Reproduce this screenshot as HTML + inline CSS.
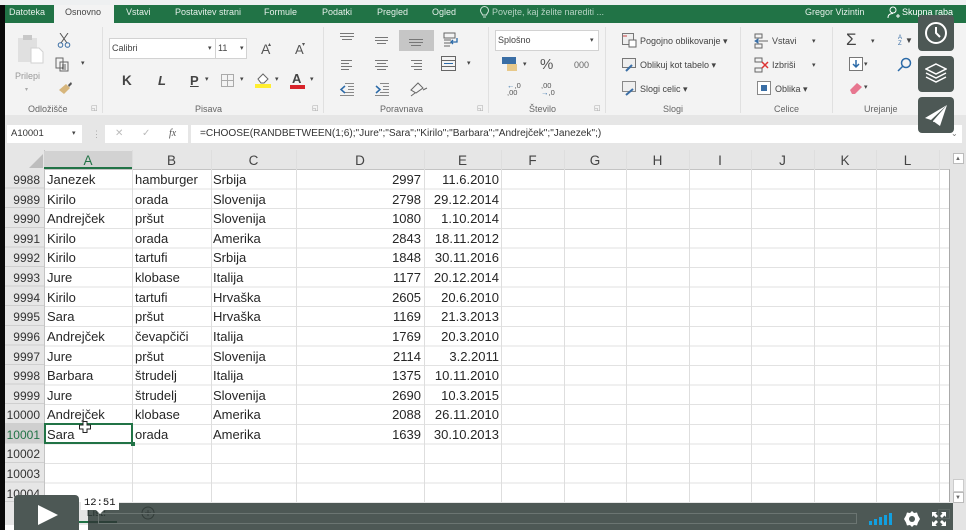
<!DOCTYPE html>
<html><head><meta charset="utf-8">
<style>
html,body{margin:0;padding:0;background:#000}
#p{position:relative;width:966px;height:530px;overflow:hidden;background:#e6e6e6;font-family:"Liberation Sans",sans-serif;color:#333}
#p div,#p span,#p svg{position:absolute}
.t{white-space:nowrap;line-height:14px}
.tab{top:6px;font-size:9px;line-height:13px;white-space:nowrap;color:#e6f0ea}
.rb{font-size:9px;color:#444;white-space:nowrap;line-height:12px}
.gl{font-size:9px;color:#666;top:103px;white-space:nowrap;line-height:12px}
.sep{top:27px;width:1px;height:86px;background:#e0e0e0}
.ch{top:153px;font-size:13.5px;color:#444;line-height:16px;text-align:center}
.cl{top:150px;width:1px;height:352px;background:#dedede}
.n{left:5px;width:35px;text-align:right;font-size:12px;color:#333;line-height:16px}
.c{font-size:13px;color:#262626;line-height:16px;white-space:nowrap}
.box{background:#4d5855;border-radius:4px;width:36px;height:36px;left:918px}
</style></head><body><div id="p">
<div style="left:0;top:0;width:966px;height:5px;background:#eef0f1"></div>
<div style="left:5px;top:5px;width:961px;height:18px;background:#217346"></div>
<div style="left:54px;top:5px;width:60px;height:19px;background:#f3f3f3"></div>
<div class="tab" style="left:9px">Datoteka</div>
<div class="tab" style="left:65px;color:#444">Osnovno</div>
<div class="tab" style="left:126px">Vstavi</div>
<div class="tab" style="left:175px">Postavitev strani</div>
<div class="tab" style="left:264px">Formule</div>
<div class="tab" style="left:322px">Podatki</div>
<div class="tab" style="left:377px">Pregled</div>
<div class="tab" style="left:432px">Ogled</div>
<svg style="left:479px;top:6px" width="11" height="13" viewBox="0 0 11 13"><path d="M3.500 9C3 7 1.500 6.500 1.500 4.500a4 4 0 0 1 8 0C9.500 6.500 8 7 7.500 9zM4 11h3" fill="none" stroke="#cfe3d8"/></svg>
<div class="tab" style="left:492px;color:#b5d3c3">Povejte, kaj želite narediti ...</div>
<div class="tab" style="left:805px">Gregor Vizintin</div>
<svg style="left:887px;top:6px" width="14" height="13" viewBox="0 0 14 13"><circle cx="6" cy="4" r="3" fill="none" stroke="#fff"/><path d="M1 12c0-3 2-4.500 5-4.500M9 10h4M11 8v4" fill="none" stroke="#fff"/></svg>
<div class="tab" style="left:902px;color:#fff">Skupna raba</div>

<!-- ribbon -->
<div style="left:5px;top:23px;width:961px;height:92px;background:#f3f3f3"></div>
<div class="sep" style="left:102px"></div><div class="sep" style="left:323px"></div><div class="sep" style="left:488px"></div><div class="sep" style="left:605px"></div><div class="sep" style="left:740px"></div><div class="sep" style="left:832px"></div>

<!-- clipboard -->
<svg style="left:16px;top:33px" width="30" height="32" viewBox="0 0 30 32"><rect x="2" y="5" width="19" height="24" fill="#e0e0e0"/><rect x="7" y="2" width="9" height="5" fill="#c8c8c8"/><path d="M15 15h8l4 4v11H15z" fill="#fff" stroke="#d2d2d2"/></svg>
<div class="rb" style="left:15px;top:70px;color:#999">Prilepi</div>
<div class="rb" style="left:25px;top:84px;font-size:6px;color:#aaa">▾</div>
<svg style="left:57px;top:33px" width="14" height="15" viewBox="0 0 14 15"><path d="M3 0l7 10M11 0L4 10" stroke="#555" fill="none"/><circle cx="3.500" cy="12" r="2.300" fill="none" stroke="#3a6ea5"/><circle cx="10.500" cy="12" r="2.300" fill="none" stroke="#3a6ea5"/></svg>
<svg style="left:55px;top:57px" width="15" height="15" viewBox="0 0 15 15"><path d="M1 1h7v10H1zM5 5h8v9H5z" fill="#f3f3f3" stroke="#666"/><path d="M7 8h4M7 10h4M7 12h4" stroke="#666"/></svg>
<svg style="left:58px;top:81px" width="15" height="14" viewBox="0 0 15 14"><path d="M1 9l7-6 4 4-6 6z" fill="#d7b67c"/><path d="M10 4l3-3 1 2-3 3z" fill="#555"/></svg>
<div class="rb" style="left:81px;top:58px;font-size:7px">▾</div>
<div class="gl" style="left:28px">Odložišče</div>

<!-- font -->
<div style="left:109px;top:38px;width:138px;height:21px;background:#fff;border:1px solid #d2d2d2;box-sizing:border-box"></div>
<div style="left:215px;top:39px;width:1px;height:19px;background:#d2d2d2"></div>
<div class="rb" style="left:112px;top:42px">Calibri</div>
<div class="rb" style="left:208px;top:43px;font-size:7px">▾</div>
<div class="rb" style="left:218px;top:42px">11</div>
<div class="rb" style="left:240px;top:43px;font-size:7px">▾</div>
<div class="t" style="left:261px;top:42px;font-size:14px;color:#555">A</div>
<div class="t" style="left:295px;top:43px;font-size:13px;color:#555">A</div>
<div class="t" style="left:268px;top:38px;font-size:6px;color:#555">▴</div>
<div class="t" style="left:302px;top:38px;font-size:6px;color:#555">▾</div>
<div class="t" style="left:122px;top:74px;font-size:13.500px;font-weight:bold;color:#444">K</div>
<div class="t" style="left:158px;top:74px;font-size:13px;font-weight:bold;font-style:italic;color:#444">L</div>
<div class="t" style="left:190px;top:74px;font-size:13px;font-weight:bold;color:#444;text-decoration:underline">P</div>
<div class="rb" style="left:205px;top:74px;font-size:7px">▾</div>
<svg style="left:221px;top:74px" width="13" height="13" viewBox="0 0 13 13"><path d="M.5.5h12v12H.5zM6.500.5v12M.5 6.500h12" fill="none" stroke="#aaa"/></svg>
<div class="rb" style="left:240px;top:74px;font-size:7px">▾</div>
<svg style="left:255px;top:72px" width="17" height="17" viewBox="0 0 17 17"><path d="M3 7l5-5 5 5-4 4H6z" fill="#fff" stroke="#666"/><rect x="0" y="12" width="16" height="4" fill="#ffee30"/></svg>
<div class="rb" style="left:275px;top:74px;font-size:7px">▾</div>
<div class="t" style="left:292px;top:72px;font-size:13px;font-weight:bold;color:#444">A</div>
<div style="left:290px;top:85px;width:15px;height:4px;background:#d8232a"></div>
<div class="rb" style="left:310px;top:74px;font-size:7px">▾</div>
<div class="gl" style="left:195px">Pisava</div>
<div class="gl" style="left:91px;font-size:7px;color:#999">◱</div><div class="gl" style="left:312px;font-size:7px;color:#999">◱</div>

<!-- align -->
<div style="left:399px;top:30px;width:35px;height:21px;background:#c6c6c6"></div>
<svg style="left:335px;top:30px" width="100" height="70" viewBox="0 0 100 70" stroke="#777" fill="none">
<path d="M5 3.500h14M5 6.500h14M7 9.500h10M40 7.500h13M40 10.500h13M42 13.500h9M74 9.500h14M74 12.500h14M76 15.500h10"/>
<path d="M6 30.500h11M6 33.500h8M6 36.500h11M6 39.500h8M40 30.500h13M42 33.500h9M40 36.500h13M42 39.500h9M76 30.500h11M79 33.500h8M76 36.500h11M79 39.500h8"/>
<path d="M10 53.500h9M13 56.500h6M13 59.500h6M10 62.500h9M5 65.500h14M54 53.500h-9M54 56.500h-6M54 59.500h-6M54 62.500h-9M54 65.500h-14" stroke="#888"/>
<path d="M10 56l-4 3.500 4 3.500M41 56l4 3.500-4 3.500" stroke="#2b6aa8" stroke-width="1.500"/>
<path d="M76 60l7-7 5 5-7 5zM80 63l-4 3M88 60l4-2" stroke="#666"/>
</svg>
<svg style="left:441px;top:32px" width="19" height="40" viewBox="0 0 19 40" fill="none" stroke="#666"><path d="M3 1h11v5H3zM3 8h7M3 11h7M3 14h6"/><path d="M16 6v4h-6M12 8l-2 2 2 2" stroke="#2b6aa8" stroke-width="1.300"/><path d="M.5 24.500h14v14H.5zM.5 28.500h14M.5 34.500h14"/><path d="M3 31.500h9" stroke="#2b6aa8"/></svg>
<div class="rb" style="left:467px;top:58px;font-size:7px">▾</div>
<div class="gl" style="left:380px">Poravnava</div>
<div class="gl" style="left:477px;font-size:7px;color:#999">◱</div>

<!-- number -->
<div style="left:495px;top:30px;width:104px;height:21px;background:#fff;border:1px solid #d2d2d2;box-sizing:border-box"></div>
<div class="rb" style="left:498px;top:34px">Splošno</div>
<div class="rb" style="left:590px;top:35px;font-size:7px">▾</div>
<svg style="left:502px;top:57px" width="16" height="15" viewBox="0 0 16 15"><rect x="0" y="0" width="14" height="7" fill="#3a6ea5"/><rect x="5" y="7" width="10" height="7" fill="#e8c98a"/></svg>
<div class="rb" style="left:523px;top:59px;font-size:7px">▾</div>
<div class="t" style="left:540px;top:58px;font-size:15px;color:#555">%</div>
<div class="t" style="left:574px;top:58px;font-size:9px;color:#666">000</div>
<div class="t" style="left:507px;top:82px;font-size:7.500px;line-height:7px;color:#555"><b style="color:#2b6aa8">←</b>,0<br>,00</div>
<div class="t" style="left:541px;top:82px;font-size:7.500px;line-height:7px;color:#555">,00<br><b style="color:#2b6aa8">→</b>,0</div>
<div class="gl" style="left:529px">Število</div>
<div class="gl" style="left:594px;font-size:7px;color:#999">◱</div>

<!-- styles -->
<svg style="left:622px;top:33px" width="15" height="15" viewBox="0 0 15 15"><rect x=".5" y=".5" width="11" height="11" fill="#eee" stroke="#777"/><rect x="7" y="7" width="7" height="7" fill="#fff" stroke="#666"/><path d="M1 3h4" stroke="#c44"/></svg>
<svg style="left:622px;top:58px" width="15" height="14" viewBox="0 0 15 14"><rect x=".5" y=".5" width="13" height="9" fill="#eee" stroke="#777"/><path d="M4 13l6-6" stroke="#3a6ea5" stroke-width="2"/></svg>
<svg style="left:622px;top:81px" width="15" height="15" viewBox="0 0 15 15"><rect x=".5" y=".5" width="13" height="10" fill="#eee" stroke="#888"/><path d="M4 14l7-6" stroke="#3a6ea5" stroke-width="2"/></svg>
<div class="rb" style="left:640px;top:35px">Pogojno oblikovanje ▾</div>
<div class="rb" style="left:640px;top:59px">Oblikuj kot tabelo ▾</div>
<div class="rb" style="left:640px;top:83px">Slogi celic ▾</div>
<div class="gl" style="left:663px">Slogi</div>

<!-- cells -->
<svg style="left:754px;top:33px" width="15" height="16" viewBox="0 0 15 16" fill="none" stroke="#666"><path d="M1 1h7v4H1zM1 11h7v4H1zM5 8h9"/><path d="M1 8l3-2v4z" fill="#3a6ea5" stroke="#3a6ea5"/></svg>
<svg style="left:754px;top:57px" width="16" height="16" viewBox="0 0 16 16" fill="none" stroke="#666"><path d="M1 1h7v4H1zM1 11h7v4H1z"/><path d="M8 5l6 6M14 5l-6 6" stroke="#d33" stroke-width="1.500"/></svg>
<svg style="left:757px;top:81px" width="15" height="15" viewBox="0 0 15 15"><rect x=".5" y=".5" width="13" height="13" fill="#fff" stroke="#888"/><rect x="4" y="4" width="6" height="6" fill="#3a6ea5"/></svg>
<div class="rb" style="left:772px;top:35px">Vstavi</div><div class="rb" style="left:812px;top:36px;font-size:7px">▾</div>
<div class="rb" style="left:772px;top:59px">Izbriši</div><div class="rb" style="left:812px;top:60px;font-size:7px">▾</div>
<div class="rb" style="left:775px;top:83px">Oblika ▾</div>
<div class="gl" style="left:774px">Celice</div>

<!-- edit -->
<div class="t" style="left:846px;top:33px;font-size:17px;color:#444">Σ</div>
<div class="rb" style="left:871px;top:36px;font-size:7px">▾</div>
<svg style="left:849px;top:57px" width="14" height="14" viewBox="0 0 14 14"><rect x=".5" y=".5" width="13" height="13" fill="#fff" stroke="#777"/><path d="M7 3v7M4 7l3 3 3-3" stroke="#2b6aa8" fill="none" stroke-width="1.500"/></svg>
<div class="rb" style="left:864px;top:59px;font-size:7px">▾</div>
<svg style="left:849px;top:81px" width="17" height="14" viewBox="0 0 17 14"><path d="M1 9l7-7 5 4-7 7H3z" fill="#e7768f"/></svg>
<div class="rb" style="left:864px;top:82px;font-size:7px">▾</div>
<div class="t" style="left:898px;top:35px;font-size:6px;line-height:6px;color:#3a6ea5">A<br>Z</div>
<div class="rb" style="left:905px;top:35px;font-size:8px">▼</div>
<svg style="left:897px;top:57px" width="15" height="15" viewBox="0 0 15 15"><circle cx="9" cy="6" r="4.500" fill="none" stroke="#2b6aa8" stroke-width="1.500"/><path d="M5.500 9.500L1 14" stroke="#2b6aa8" stroke-width="1.500"/></svg>
<div class="gl" style="left:864px">Urejanje</div>

<!-- formula bar -->
<div style="left:5px;top:115px;width:961px;height:35px;background:#e6e6e6"></div>
<div style="left:7px;top:125px;width:75px;height:18px;background:#fff"></div>
<div class="t" style="left:11px;top:127px;font-size:9.500px;color:#333">A10001</div>
<div class="rb" style="left:72px;top:128px;font-size:7px">▾</div>
<div class="t" style="left:92px;top:127px;font-size:9px;color:#aaa">⋮</div>
<div style="left:105px;top:125px;width:83px;height:18px;background:#fff"></div>
<div class="t" style="left:115px;top:127px;font-size:10px;color:#bbb">✕</div>
<div class="t" style="left:142px;top:127px;font-size:10px;color:#bbb">✓</div>
<div class="t" style="left:169px;top:127px;font-size:10px;font-style:italic;font-family:'Liberation Serif',serif;color:#555">fx</div>
<div style="left:191px;top:125px;width:771px;height:18px;background:#fff"></div>
<div class="t" style="left:200px;top:127px;font-size:10.150px;color:#333">=CHOOSE(RANDBETWEEN(1;6);"Jure";"Sara";"Kirilo";"Barbara";"Andrejček";"Janezek";)</div>
<div class="t" style="left:951px;top:127px;font-size:8px;color:#777">⌄</div>

<!-- grid -->
<div style="left:44px;top:169px;width:906px;height:333px;box-sizing:border-box;background-color:#fff;background-image:repeating-linear-gradient(to bottom,transparent 0,transparent 18.6px,#e2e2e2 18.6px,#e2e2e2 19.6px);border-right:1px solid #aaa;border-top:1px solid #c4c4c4"></div>
<div style="left:5px;top:169px;width:39px;height:333px;background-color:#e6e6e6;background-image:repeating-linear-gradient(to bottom,transparent 0,transparent 18.6px,#cfcfcf 18.6px,#cfcfcf 19.6px)"></div>
<div style="left:5px;top:423.800px;width:39px;height:19.600px;background:#cfcfcf"></div>
<div class="cl" style="left:44px;background:#c4c4c4"></div><div class="cl" style="left:132px"></div><div class="cl" style="left:211px"></div><div class="cl" style="left:296px"></div><div class="cl" style="left:424px"></div><div class="cl" style="left:501px"></div><div class="cl" style="left:564px"></div><div class="cl" style="left:626px"></div><div class="cl" style="left:689px"></div><div class="cl" style="left:751px"></div><div class="cl" style="left:814px"></div><div class="cl" style="left:876px"></div><div class="cl" style="left:939px"></div>

<!-- headers -->
<div style="left:44px;top:151px;width:88px;height:18px;background:#d2d2d2;border-bottom:2px solid #217346;box-sizing:border-box"></div>
<svg style="left:29px;top:154px" width="14" height="14"><path d="M14 0v14H0z" fill="#bdbdbd"/></svg>
<div class="ch" style="left:44px;width:88px;color:#217346">A</div><div class="ch" style="left:132px;width:79px">B</div><div class="ch" style="left:211px;width:85px">C</div><div class="ch" style="left:296px;width:128px">D</div><div class="ch" style="left:424px;width:77px">E</div><div class="ch" style="left:501px;width:63px">F</div><div class="ch" style="left:564px;width:62px">G</div><div class="ch" style="left:626px;width:63px">H</div><div class="ch" style="left:689px;width:62px">I</div><div class="ch" style="left:751px;width:63px">J</div><div class="ch" style="left:814px;width:62px">K</div><div class="ch" style="left:876px;width:63px">L</div>

<div style="left:0;top:1px;width:966px;height:520px">
<div class="n" style="top:171px">9988</div><div class="c" style="left:47px;top:171px">Janezek</div><div class="c" style="left:135px;top:171px">hamburger</div><div class="c" style="left:213px;top:171px">Srbija</div><div class="c" style="left:296px;width:125px;text-align:right;top:171px">2997</div><div class="c" style="left:424px;width:75px;text-align:right;top:171px">11.6.2010</div>
<div class="n" style="top:191px">9989</div><div class="c" style="left:47px;top:191px">Kirilo</div><div class="c" style="left:135px;top:191px">orada</div><div class="c" style="left:213px;top:191px">Slovenija</div><div class="c" style="left:296px;width:125px;text-align:right;top:191px">2798</div><div class="c" style="left:424px;width:75px;text-align:right;top:191px">29.12.2014</div>
<div class="n" style="top:210px">9990</div><div class="c" style="left:47px;top:210px">Andrejček</div><div class="c" style="left:135px;top:210px">pršut</div><div class="c" style="left:213px;top:210px">Slovenija</div><div class="c" style="left:296px;width:125px;text-align:right;top:210px">1080</div><div class="c" style="left:424px;width:75px;text-align:right;top:210px">1.10.2014</div>
<div class="n" style="top:230px">9991</div><div class="c" style="left:47px;top:230px">Kirilo</div><div class="c" style="left:135px;top:230px">orada</div><div class="c" style="left:213px;top:230px">Amerika</div><div class="c" style="left:296px;width:125px;text-align:right;top:230px">2843</div><div class="c" style="left:424px;width:75px;text-align:right;top:230px">18.11.2012</div>
<div class="n" style="top:249px">9992</div><div class="c" style="left:47px;top:249px">Kirilo</div><div class="c" style="left:135px;top:249px">tartufi</div><div class="c" style="left:213px;top:249px">Srbija</div><div class="c" style="left:296px;width:125px;text-align:right;top:249px">1848</div><div class="c" style="left:424px;width:75px;text-align:right;top:249px">30.11.2016</div>
<div class="n" style="top:269px">9993</div><div class="c" style="left:47px;top:269px">Jure</div><div class="c" style="left:135px;top:269px">klobase</div><div class="c" style="left:213px;top:269px">Italija</div><div class="c" style="left:296px;width:125px;text-align:right;top:269px">1177</div><div class="c" style="left:424px;width:75px;text-align:right;top:269px">20.12.2014</div>
<div class="n" style="top:289px">9994</div><div class="c" style="left:47px;top:289px">Kirilo</div><div class="c" style="left:135px;top:289px">tartufi</div><div class="c" style="left:213px;top:289px">Hrvaška</div><div class="c" style="left:296px;width:125px;text-align:right;top:289px">2605</div><div class="c" style="left:424px;width:75px;text-align:right;top:289px">20.6.2010</div>
<div class="n" style="top:308px">9995</div><div class="c" style="left:47px;top:308px">Sara</div><div class="c" style="left:135px;top:308px">pršut</div><div class="c" style="left:213px;top:308px">Hrvaška</div><div class="c" style="left:296px;width:125px;text-align:right;top:308px">1169</div><div class="c" style="left:424px;width:75px;text-align:right;top:308px">21.3.2013</div>
<div class="n" style="top:328px">9996</div><div class="c" style="left:47px;top:328px">Andrejček</div><div class="c" style="left:135px;top:328px">čevapčiči</div><div class="c" style="left:213px;top:328px">Italija</div><div class="c" style="left:296px;width:125px;text-align:right;top:328px">1769</div><div class="c" style="left:424px;width:75px;text-align:right;top:328px">20.3.2010</div>
<div class="n" style="top:348px">9997</div><div class="c" style="left:47px;top:348px">Jure</div><div class="c" style="left:135px;top:348px">pršut</div><div class="c" style="left:213px;top:348px">Slovenija</div><div class="c" style="left:296px;width:125px;text-align:right;top:348px">2114</div><div class="c" style="left:424px;width:75px;text-align:right;top:348px">3.2.2011</div>
<div class="n" style="top:367px">9998</div><div class="c" style="left:47px;top:367px">Barbara</div><div class="c" style="left:135px;top:367px">štrudelj</div><div class="c" style="left:213px;top:367px">Italija</div><div class="c" style="left:296px;width:125px;text-align:right;top:367px">1375</div><div class="c" style="left:424px;width:75px;text-align:right;top:367px">10.11.2010</div>
<div class="n" style="top:387px">9999</div><div class="c" style="left:47px;top:387px">Jure</div><div class="c" style="left:135px;top:387px">štrudelj</div><div class="c" style="left:213px;top:387px">Slovenija</div><div class="c" style="left:296px;width:125px;text-align:right;top:387px">2690</div><div class="c" style="left:424px;width:75px;text-align:right;top:387px">10.3.2015</div>
<div class="n" style="top:406px">10000</div><div class="c" style="left:47px;top:406px">Andrejček</div><div class="c" style="left:135px;top:406px">klobase</div><div class="c" style="left:213px;top:406px">Amerika</div><div class="c" style="left:296px;width:125px;text-align:right;top:406px">2088</div><div class="c" style="left:424px;width:75px;text-align:right;top:406px">26.11.2010</div>
<div class="n" style="top:426px;color:#217346">10001</div><div class="c" style="left:47px;top:426px">Sara</div><div class="c" style="left:135px;top:426px">orada</div><div class="c" style="left:213px;top:426px">Amerika</div><div class="c" style="left:296px;width:125px;text-align:right;top:426px">1639</div><div class="c" style="left:424px;width:75px;text-align:right;top:426px">30.10.2013</div>
<div class="n" style="top:445px">10002</div><div class="n" style="top:465px">10003</div><div class="n" style="top:485px">10004</div>
</div>

<div style="left:44px;top:423px;width:89px;height:21px;box-sizing:border-box;border:2px solid #217346"></div>
<div style="left:131px;top:442px;width:4px;height:4px;background:#217346"></div>
<svg style="left:79px;top:421px" width="12" height="12" viewBox="0 0 12 12"><path d="M4 .5h4v3.500h3.500v4H8v3.500H4V8H.5V4H4z" fill="#fff" stroke="#222"/></svg>

<!-- scrollbar -->
<div style="left:950px;top:150px;width:16px;height:380px;background:#e4e4e4"></div>
<div style="left:953px;top:153px;width:11px;height:11px;background:#fff;border:1px solid #bbb;box-sizing:border-box"></div>
<div class="t" style="left:955px;top:152px;font-size:6px;color:#666">▲</div>
<div style="left:953px;top:479px;width:11px;height:13px;background:#fff;border:1px solid #ccc;box-sizing:border-box"></div>
<div style="left:953px;top:492px;width:11px;height:11px;background:#fff;border:1px solid #bbb;box-sizing:border-box"></div>
<div class="t" style="left:955px;top:491px;font-size:6px;color:#666">▼</div>

<!-- left black strip -->
<div style="left:0;top:5px;width:5px;height:525px;background:#0a0a0a"></div>

<!-- player -->
<div style="left:5px;top:503px;width:945px;height:27px;background:#e6e6e6"></div>
<div style="left:78px;top:521px;width:10px;height:2px;background:#217346"></div>
<div style="left:5px;top:525px;width:120px;height:5px;background:#fff"></div>
<div style="left:88px;top:503px;width:865px;height:27px;background:#4d5855"></div>
<div style="left:14px;top:495px;width:65px;height:35px;background:#4d5855;border-radius:4px 4px 0 0"></div>
<svg style="left:38px;top:505px" width="20" height="20"><path d="M0 0l20 10-20 10z" fill="#fff"/></svg>
<div class="t" style="left:87px;top:506px;font-size:9px;font-weight:bold;color:#2f3a37">List:</div>
<div style="left:88px;top:521px;width:29px;height:2px;background:#2c3f38"></div>
<svg style="left:141px;top:506px" width="14" height="14" viewBox="0 0 14 14" fill="none" stroke="#333d3a"><circle cx="7" cy="7" r="6"/><path d="M7 4v6M4 7h6"/></svg>
<div style="left:98px;top:513px;width:759px;height:11px;border:1px solid #6b7572;box-sizing:border-box"></div>
<div style="left:938px;top:509px;width:12px;height:10px;border:1px solid #5c6663;box-sizing:border-box"></div>
<div style="left:81px;top:495px;width:38px;height:15px;background:#fff"></div>
<div class="t" style="left:84px;top:496px;font-size:10.500px;color:#111;font-family:'Liberation Mono',monospace">12:51</div>
<svg style="left:95px;top:509px" width="10" height="5"><path d="M0 0h10L5 5z" fill="#fff"/></svg>
<svg style="left:868px;top:512px" width="25" height="14"><g fill="#12a0e0"><rect x="1" y="9" width="3" height="4"/><rect x="6" y="7" width="3" height="6"/><rect x="11" y="5" width="3" height="8"/><rect x="16" y="3" width="3" height="10"/><rect x="21" y="1" width="3" height="12"/></g></svg>
<svg style="left:904px;top:511px" width="16" height="16" viewBox="0 0 16 16"><path d="M8 0l2 2 3-.5 1 3 2 3.500-2 3.500-1 3-3-.5-2 2-2-2-3 .5-1-3L0 8l2-3.500 1-3 3 .5z" fill="#fff"/><circle cx="8" cy="8" r="3" fill="#4d5855"/></svg>
<svg style="left:932px;top:512px" width="14" height="14" viewBox="0 0 14 14" fill="#fff"><path d="M0 0h5L3.500 1.500 6 4 4 6 1.500 3.500 0 5zM14 0v5l-1.500-1.500L10 6 8 4l2.500-2.500L9 0zM0 14V9l1.500 1.500L4 8l2 2-2.500 2.500L5 14zM14 14H9l1.500-1.500L8 10l2-2 2.500 2.500L14 9z"/></svg>

<!-- side buttons -->
<div class="box" style="top:15px"></div>
<svg style="left:925px;top:22px" width="22" height="22" viewBox="0 0 22 22" fill="none" stroke="#fff" stroke-width="2"><circle cx="11" cy="11" r="10"/><path d="M11 5v6l4 4"/></svg>
<div class="box" style="top:56px"></div>
<svg style="left:925px;top:63px" width="22" height="22" viewBox="0 0 22 22" fill="none" stroke="#fff" stroke-width="1.500"><path d="M11 1l10 5-10 5L1 6zM1 10l10 5 10-5M1 14l10 5 10-5"/></svg>
<div class="box" style="top:97px"></div>
<svg style="left:925px;top:105px" width="22" height="21" viewBox="0 0 22 21"><path d="M22 0L0 13l6 2zM22 0L8 16l7 5zM8 16v1l2-.5z" fill="#fff"/></svg>
</div></body></html>
